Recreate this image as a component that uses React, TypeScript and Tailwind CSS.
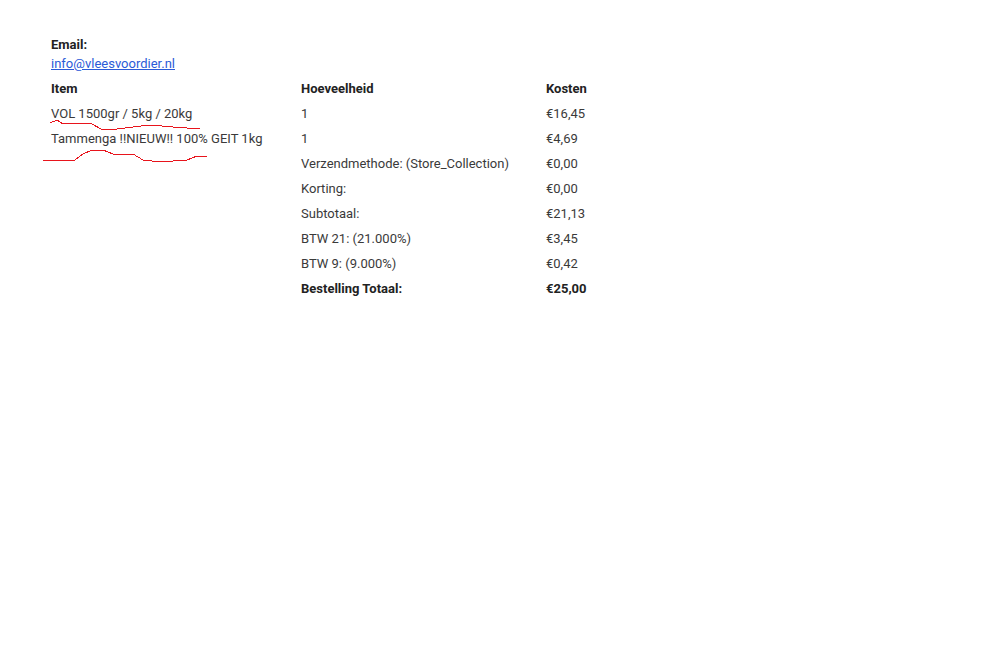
import React from 'react'

const rows: { item: string; qty: string; cost: string; bold?: boolean }[] = [
  { item: 'VOL 1500gr / 5kg / 20kg', qty: '1', cost: '€16,45' },
  { item: 'Tammenga !!NIEUW!! 100% GEIT 1kg', qty: '1', cost: '€4,69' },
  { item: '', qty: 'Verzendmethode: (Store_Collection)', cost: '€0,00' },
  { item: '', qty: 'Korting:', cost: '€0,00' },
  { item: '', qty: 'Subtotaal:', cost: '€21,13' },
  { item: '', qty: 'BTW 21: (21.000%)', cost: '€3,45' },
  { item: '', qty: 'BTW 9: (9.000%)', cost: '€0,42' },
  { item: '', qty: 'Bestelling Totaal:', cost: '€25,00', bold: true },
]

export default function App() {
  return (
    <div className="relative min-h-[660px] bg-white pl-[51px] pt-[35px] text-[13px] text-[#3a3a3a]" style={{ fontFamily: 'Roboto, "Liberation Sans", sans-serif' }}>
      {/* Contact */}
      <div className="leading-[19px]">
        <p className="font-bold text-[#222]">Email:</p>
        <a href="#" className="text-[#2b5bd7] underline">info@vleesvoordier.nl</a>
      </div>

      {/* Order table */}
      <table className="mt-[3px] border-collapse">
        <thead>
          <tr className="h-[25px] text-left font-bold text-[#222]">
            <th className="w-[250px] p-0 font-bold">Item</th>
            <th className="w-[245px] p-0 font-bold">Hoeveelheid</th>
            <th className="p-0 font-bold">Kosten</th>
          </tr>
        </thead>
        <tbody>
          {rows.map((r, i) => (
            <tr key={i} className={`h-[25px] ${r.bold ? 'font-bold text-[#222]' : ''}`}>
              <td className="p-0">{r.item}</td>
              <td className="p-0">{r.qty}</td>
              <td className="p-0">{r.cost}</td>
            </tr>
          ))}
        </tbody>
      </table>

      {/* hand-drawn red marks */}
      <svg className="pointer-events-none absolute left-0 top-0" width="260" height="180" fill="none" shapeRendering="crispEdges">
        <polyline
          points="50,123 57,120 63,124 90,123 103,130 117,129 133,127 150,125 173,127 187,128 200,128"
          stroke="#e8141c"
          strokeWidth="1"
        />
        <polyline
          points="43,160 75,160 83,154 92,150 103,150 113,154 133,154 143,160 160,162 187,160 197,156 207,156"
          stroke="#e8141c"
          strokeWidth="1"
        />
      </svg>
    </div>
  )
}
